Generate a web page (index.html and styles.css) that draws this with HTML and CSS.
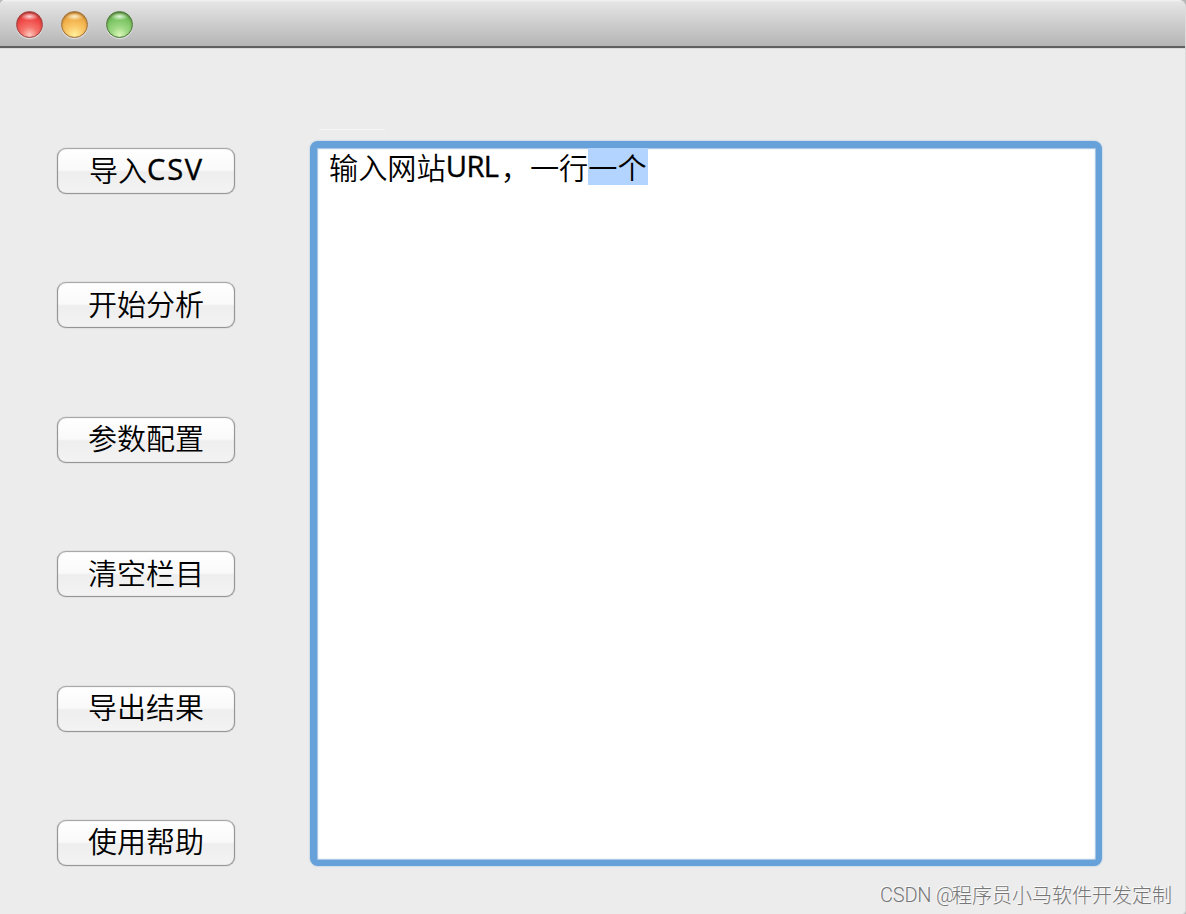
FILE: index.html
```
<!DOCTYPE html>
<html lang="zh-CN">
<head>
<meta charset="utf-8">
<title>网站分析</title>
<link rel="stylesheet" href="styles.css">
</head>
<body>
<div class="window">
  <header class="titlebar">
    <span class="light red"></span>
    <span class="light yellow"></span>
    <span class="light green"></span>
  </header>
  <main class="content">
    <nav class="actions">
      <button class="btn"><span>导入</span><span class="latin csv">CSV</span></button>
      <button class="btn">开始分析</button>
      <button class="btn">参数配置</button>
      <button class="btn">清空栏目</button>
      <button class="btn">导出结果</button>
      <button class="btn">使用帮助</button>
    </nav>
    <section class="column">
      <div class="rule"></div>
      <div class="editor">
        <div class="line"><span>输入网站</span><span class="latin url">URL</span><span>，一行</span><span class="selected">一个</span></div>
      </div>
    </section>
  </main>
  <footer class="watermark"><span class="brand">CSDN @</span><span>程序员小马软件开发定制</span></footer>
</div>
</body>
</html>
```
FILE: styles.css
```
* { box-sizing: border-box; }
body { margin: 0; background: #b9b9b9; font-family: "Noto Sans CJK SC", sans-serif; }
.window {
  position: relative;
  width: 1186px;
  height: 914px;
  overflow: hidden;
  background: #ececec;
  border-right: 1px solid #dcdcdc;
  border-radius: 5px 7px 4px 0;
}
.titlebar {
  display: flex;
  align-items: flex-start;
  gap: 18px;
  height: 48px;
  padding: 11px 16px 0;
  background: linear-gradient(#f4f4f4 0, #e5e5e5 2px, #b5b5b5 46px);
  border-bottom: 2px solid #606060;
  box-shadow: 0 1px 0 #dadada;
}
.light {
  width: 27px;
  height: 27px;
  border-radius: 50%;
  border: 1px solid;
  box-shadow: inset 0 1px 2px rgba(60, 25, 10, .4), 0 1px 1px rgba(255, 255, 255, .6);
}
.red {
  border-color: #a24443;
  background: radial-gradient(ellipse 9px 4px at 50% 18%, rgba(255,235,235,.85), transparent), radial-gradient(circle at 50% 92%, #ffc9be 0, #f5746c 8px, #f04a48 16px, #d83a3a 24px);
}
.yellow {
  border-color: #a1713a;
  background: radial-gradient(ellipse 9px 4px at 50% 18%, rgba(255,250,225,.85), transparent), radial-gradient(circle at 50% 92%, #fff09c 0, #fbcc6c 8px, #f1b04b 16px, #dc9735 24px);
}
.green {
  border-color: #4c7b3d;
  background: radial-gradient(ellipse 9px 4px at 50% 18%, rgba(240,255,235,.85), transparent), radial-gradient(circle at 50% 92%, #daf7b8 0, #a0d985 8px, #7cc564 16px, #60a84b 24px);
}
.content {
  display: flex;
  gap: 75px;
  padding: 81px 83px 0 57px;
}
.actions {
  display: flex;
  flex-direction: column;
  justify-content: space-between;
  width: 178px;
  height: 718px;
  margin-top: 19px;
}
.btn {
  display: flex;
  justify-content: center;
  align-items: center;
  height: 46px;
  padding: 0 0 5px;
  border: 1.5px solid #969696;
  border-top-color: #a8a8a8;
  border-radius: 9px;
  background: linear-gradient(#fff 0, #f9f9f9 48%, #eee 52%, #f3f3f3 100%);
  box-shadow: 0 0 1px 0 rgba(0, 0, 0, .45), inset 0 0 1px rgba(0, 0, 0, .35);
  font: 350 29px/40px "Noto Sans CJK SC", sans-serif;
  color: #000;
}
.latin {
  font-family: "Open Sans", "Noto Sans", sans-serif;
  font-weight: 500;
  -webkit-text-stroke: .4px #000;
}
.csv { letter-spacing: 1.8px; margin-right: -1px; }
.url { width: 55px; letter-spacing: -.6px; }
.column { width: 792px; }
.rule { width: 66px; height: 1px; margin: 0 0 11px 9px; background: #f5f5f5; }
.editor {
  width: 792px;
  height: 725px;
  padding: 0 12px;
  border: 7px solid #66a1d9;
  border-width: 7px 6px 6px 7px;
  border-radius: 8px;
  background: #fff;
  background-clip: padding-box;
  box-shadow: inset 0 0 0 1px #a9c7e3, inset 0 0 2px 1px #c8dcef, 0 0 2px #8fb9e0;
}
.line {
  display: flex;
  height: 37px;
  padding-top: 1px;
  font-size: 29.2px;
  font-weight: 350;
  line-height: 34px;
  white-space: nowrap;
}
.selected { width: 60px; margin-top: -1px; padding-top: 1px; background: #b3d4fe; }
.watermark {
  position: absolute;
  right: 13px;
  bottom: 4px;
  display: flex;
  font-size: 20px;
  line-height: 30px;
  font-weight: 300;
  color: #777;
  text-shadow: -1px -1px 0 #fafafa;
  white-space: nowrap;
}
.brand { width: 72px; font-family: Roboto, "Liberation Sans", sans-serif; letter-spacing: -.2px; }
```
